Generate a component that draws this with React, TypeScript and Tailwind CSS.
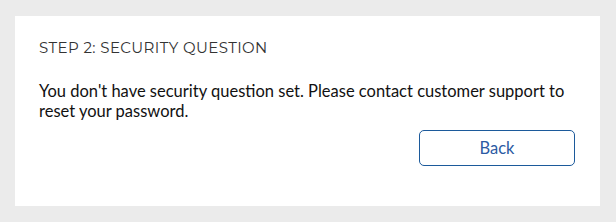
export default function App() {
  return (
    <div className="min-h-screen w-full bg-[#ebebeb] pt-4 pb-4 pl-[15px] pr-4">
      <div className="w-[585px] h-[190px] bg-white pl-6 pr-[25px] pt-[22px]">
        <h2 className="font-['Montserrat','Open_Sans',sans-serif] text-[15px] leading-5 text-[#333] uppercase tracking-[0.4px]">
          Step 2: Security Question
        </h2>
        <p className="mt-[23px] font-['Lato',sans-serif] text-[16.5px] leading-5 text-[#111]">
          You don't have security question set. Please contact customer support to reset your password.
        </p>
        <div className="mt-[9px] flex justify-end">
          <button className="w-[156px] h-9 rounded-[5px] border border-[#1c5a9b] font-['Lato',sans-serif] text-[16.5px] text-[#2b5aa3]">
            Back
          </button>
        </div>
      </div>
    </div>
  );
}
